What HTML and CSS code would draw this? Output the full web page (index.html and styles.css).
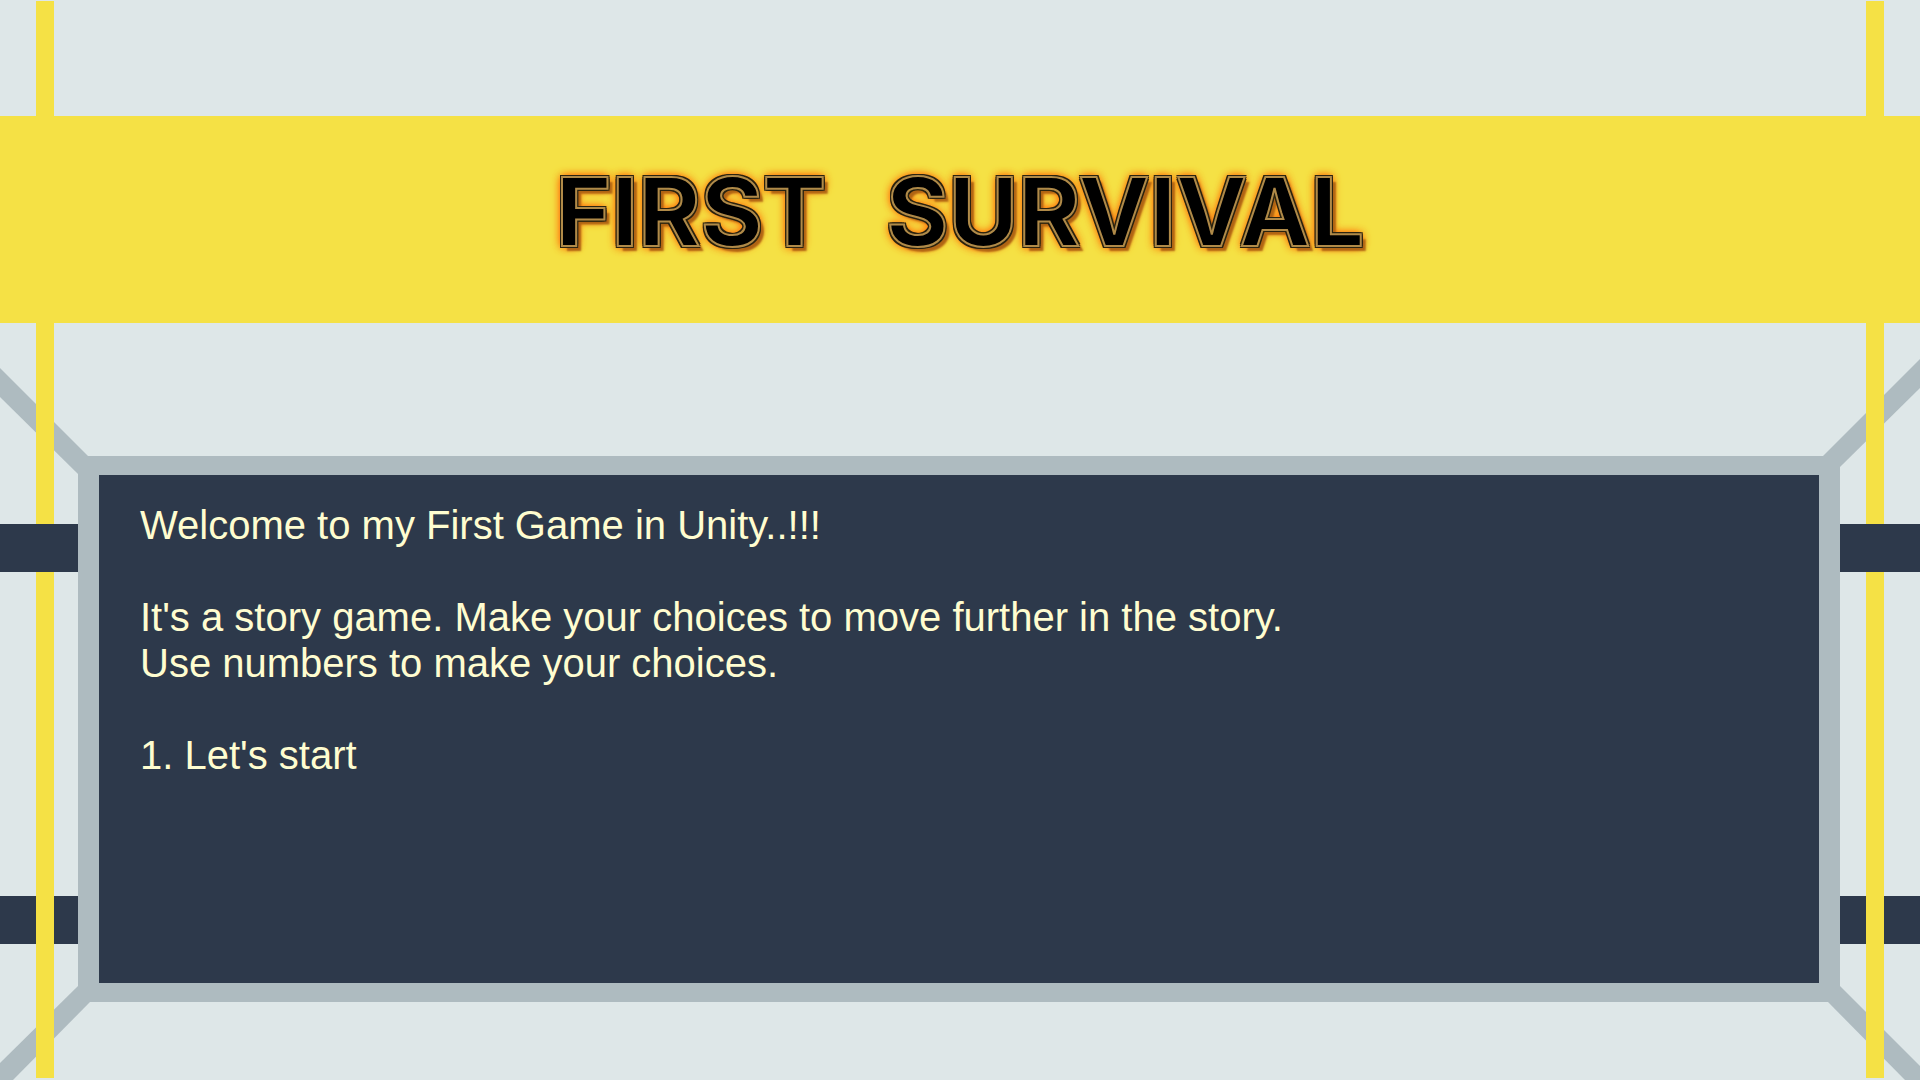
FILE: index.html
```html
<!DOCTYPE html>
<html lang="en">

<head>
    <meta charset="UTF-8">
    <title>First Survival</title>
    <link rel="stylesheet" href="styles.css">
</head>

<body>
    <div class="rails">
        <div class="rail"></div>
        <div class="rail"></div>
    </div>

    <header class="banner">
        <h1 class="title"><span>FIRST</span> <span>SURVIVAL</span></h1>
    </header>

    <main class="stage">
        <svg class="frame" viewBox="0 0 78 757" preserveAspectRatio="none" aria-hidden="true">
            <path class="strut" d="M0 45L88 133L88 151H78L0 74Z" />
            <path class="strut" d="M0 740L78 663H90V679L13 757H0Z" />
            <rect class="beam" x="0" y="573" width="78" height="48" />
            <rect class="post" x="36" y="0" width="18" height="755" />
            <rect class="beam" x="0" y="201" width="78" height="48" />
        </svg>

        <section class="screen">
            <p>Welcome to my First Game in Unity..!!!</p>
            <p>It's a story game. Make your choices to move further in the story.<br>Use numbers to make your choices.</p>
            <p>1. Let's start</p>
        </section>

        <svg class="frame" viewBox="0 0 80 757" preserveAspectRatio="none" aria-hidden="true">
            <path class="strut" d="M-17 133L80 36V65L0 144H-17Z" />
            <path class="strut" d="M-12 663H0L80 743V757H65L-12 679Z" />
            <rect class="beam" x="0" y="573" width="80" height="48" />
            <rect class="post" x="26" y="0" width="18" height="755" />
            <rect class="beam" x="0" y="201" width="80" height="48" />
        </svg>
    </main>
</body>

</html>
```
FILE: styles.css
```css
* {
    box-sizing: border-box;
}

body {
    display: flex;
    flex-direction: column;
    min-height: 100vh;
    margin: 0;
    overflow-x: hidden;
    background-color: #dee7e8;
    font-family: "Liberation Sans", Arial, sans-serif;
}

.rails {
    display: flex;
    justify-content: space-between;
    height: 116px;
    padding: 1px 36px 0;
}

.rail {
    width: 18px;
    background-color: #f5e145;
}

.banner {
    display: flex;
    justify-content: center;
    padding: 38px 0 53px;
    background-color: #f5e145;
}

.title {
    display: flex;
    gap: 60px;
    margin: 0;
    color: #000;
    font-family: Inter, Roboto, sans-serif;
    font-size: 95px;
    font-weight: 700;
    line-height: 116px;
    -webkit-text-stroke: 2px #b08a48;
    /* dark rim, then the brown drop edge, then the orange glow */
    text-shadow:
        2px 0 #2b2410, -2px 0 #2b2410, 0 2px #2b2410, 0 -2px #2b2410,
        2px 2px #2b2410, -2px -2px #2b2410, 2px -2px #2b2410, -2px 2px #2b2410,
        5px 5px 2px #b06414,
        0 0 6px #ff7a10, 0 0 8px #ff7a10, 0 0 10px #ff8a18, 0 0 12px #ff8a18;
}

.stage {
    display: grid;
    grid-template-columns: 78px 1fr 80px;
    flex: 1;
}

.frame {
    width: 100%;
    height: 100%;
    overflow: visible;
}

.strut {
    fill: #aebbc0;
}

.beam {
    fill: #2d394b;
}

.post {
    fill: #f5e145;
}

.screen {
    position: relative;
    margin: 133px 0 78px;
    padding: 27px 41px;
    border: solid #aebbc0;
    border-width: 19px 21px;
    background-color: #2d394b;
    color: #fffdd0;
    font-size: 40px;
    line-height: 46px;
}

.screen p {
    margin: 0 0 46px;
}
```
